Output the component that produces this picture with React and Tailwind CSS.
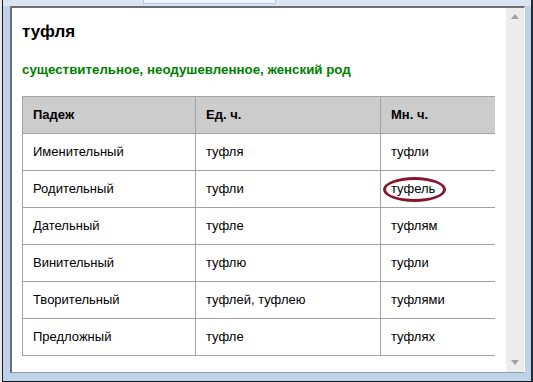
const rows = [
  ['Именительный', 'туфля', 'туфли'],
  ['Родительный', 'туфли', 'туфель'],
  ['Дательный', 'туфле', 'туфлям'],
  ['Винительный', 'туфлю', 'туфли'],
  ['Творительный', 'туфлей, туфлею', 'туфлями'],
  ['Предложный', 'туфле', 'туфлях'],
]

function Cell({ children, head, last, marked }) {
  return (
    <div
      className={`relative h-[37px] flex items-center pl-[10px] border-b border-[#a3a3a3] ${last ? '' : 'border-r'} ${head ? 'bg-[#cccccc] font-bold' : 'bg-white'}`}
    >
      {marked && (
        <span className="absolute left-[2px] top-[6px] w-[63px] h-[25px] rounded-[50%] border-[3px] border-[#85172a]" />
      )}
      <span className="relative">{children}</span>
    </div>
  )
}

export default function App() {
  return (
    <div
      className="w-[533px] h-[382px] flex overflow-hidden bg-[#e9e9e9]"
      style={{ fontFamily: '"Liberation Sans", Arial, sans-serif' }}
    >
      <div className="w-[2px] shrink-0 bg-[#e9e9e9]" />
      <div className="w-[1px] shrink-0 bg-[#1a1a1a]" />
      <div className="relative w-[528px] shrink-0 flex flex-col bg-[#bdd3ec] border-b border-[#1a1a1a]">
        <div className="h-[6px] shrink-0 bg-[#dae4f3]" />
        <div className="absolute left-[140px] top-0 w-[133px] h-[4px] bg-[#eef3fb] border-x border-b border-[#a9ccf0]" />
        <div className="flex-1 flex pl-[7px] pr-[6px] pb-[8px]">
          <div className="flex-1 flex bg-white border-t-2 border-l-2 border-[#6e6e6e] border-b border-b-[#9a9a9a] border-r border-r-white">
            <div className="w-[494px] shrink-0 pt-[14px] pl-[10px] text-black">
              <div className="text-[17px] leading-[20px] font-bold">туфля</div>
              <div className="mt-[20px] text-[13.3px] leading-[16px] font-bold text-[#008000]">
                существительное, неодушевленное, женский род
              </div>
              <div className="mt-[18px] w-[473px] grid grid-cols-[173px_185px_114px] border-l border-t border-[#a3a3a3] text-[13px]">
                <Cell head>Падеж</Cell>
                <Cell head>Ед. ч.</Cell>
                <Cell head last>Мн. ч.</Cell>
                {rows.map((r, i) => (
                  <div key={i} className="contents">
                    <Cell>{r[0]}</Cell>
                    <Cell>{r[1]}</Cell>
                    <Cell last marked={i === 1}>{r[2]}</Cell>
                  </div>
                ))}
              </div>
            </div>
            <div className="w-[18px] shrink-0 bg-[#ececec] flex flex-col items-center justify-between pt-[6px] pb-[7px]">
              <svg width="8" height="5" viewBox="0 0 8 5">
                <path d="M0 5 L4 0 L8 5 Z" fill="#a0a0a0" />
              </svg>
              <svg width="8" height="5" viewBox="0 0 8 5">
                <path d="M0 0 L8 0 L4 5 Z" fill="#a0a0a0" />
              </svg>
            </div>
          </div>
        </div>
      </div>
      <div className="w-[2px] shrink-0 bg-[#2a2a2a]" />
    </div>
  )
}
